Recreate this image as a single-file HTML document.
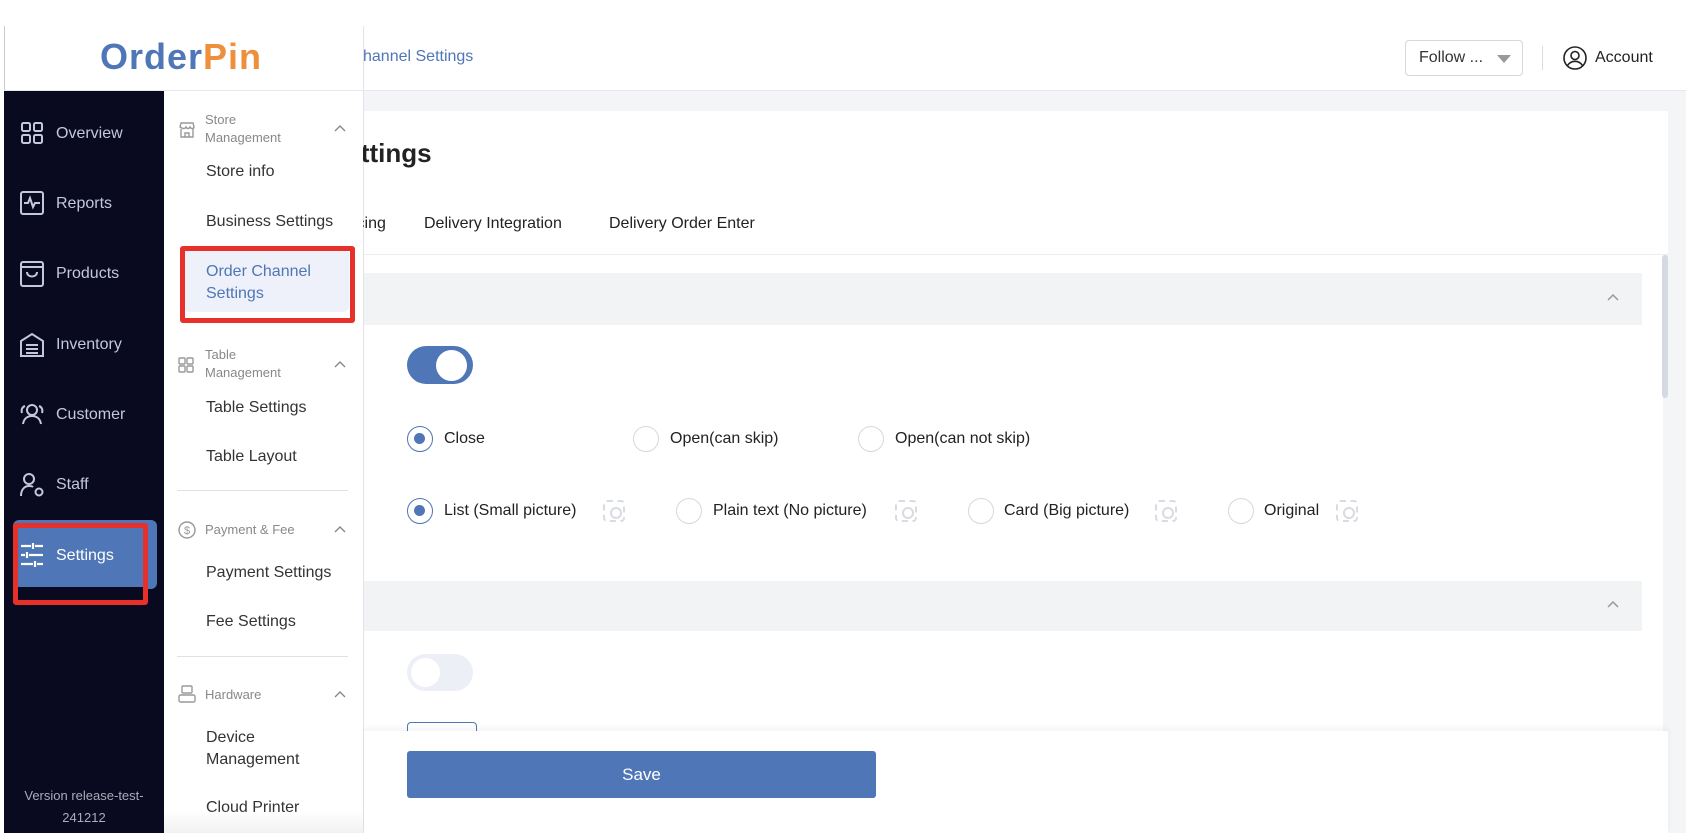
<!DOCTYPE html>
<html><head><meta charset="utf-8"><style>
*{box-sizing:border-box;margin:0;padding:0}
body{width:1686px;height:836px;background:#fff;font-family:"Liberation Sans",sans-serif;position:relative;overflow:hidden;color:#222}
.a{position:absolute;white-space:nowrap}
.side{left:4px;top:91px;width:160px;height:745px;background:#090a1f}
.si{color:#c3c7df;font-size:16px}
.sub{left:164px;top:91px;width:199px;height:745px;background:#fff}
.mt{font-size:16px;color:#333}
.mh{font-size:13px;color:#888;line-height:18px}
.radio{width:26px;height:26px;border:1.5px solid #d5d8e0;border-radius:50%}
.radio.on{border-color:#4f76b6}
.radio.on:after{content:"";position:absolute;left:6px;top:6px;width:11px;height:11px;border-radius:50%;background:#4f76b6}
.rt{font-size:16px;color:#222}
.eye{width:22px;height:22px;border:2px dashed #d8dbe2;border-radius:4px}
.eye:after{content:"";position:absolute;left:5px;top:5px;width:8px;height:8px;border:2px solid #d8dbe2;border-radius:50%}
</style></head><body>
<div class="a" style="left:4px;top:26px;width:1px;height:66px;background:#ccc"></div>
<div class="a" style="left:4px;top:90px;width:1682px;height:1px;background:#e6e8ee"></div>
<div class="a" style="left:363px;top:26px;width:1px;height:810px;background:#e2e4ec"></div>
<div class="a" style="left:100px;top:36px;font-size:36px;font-weight:bold;letter-spacing:1px"><span style="color:#4f76b6">Order</span><span style="color:#ee8f3c">Pin</span></div>
<div class="a" style="left:363px;top:48px;font-size:16px;color:#4f76b6">hannel Settings</div>
<div class="a" style="left:1405px;top:40px;width:118px;height:36px;border:1px solid #d8d8d8;border-radius:4px"></div>
<div class="a" style="left:1419px;top:49px;font-size:16px;color:#333">Follow ...</div>
<div class="a" style="left:1497px;top:55px;width:0;height:0;border-left:7px solid transparent;border-right:7px solid transparent;border-top:8px solid #999"></div>
<div class="a" style="left:1542px;top:46px;width:1px;height:24px;background:#ddd"></div>
<svg class="a" style="left:1563px;top:46px" width="24" height="24" viewBox="0 0 24 24" fill="none" stroke="#222" stroke-width="1.6"><circle cx="12" cy="12" r="11"/><circle cx="12" cy="9.5" r="4"/><path d="M4.5 19.5c2-3 4.5-4.2 7.5-4.2s5.5 1.2 7.5 4.2"/></svg>
<div class="a" style="left:1595px;top:49px;font-size:16px;color:#222">Account</div>
<div class="a" style="left:364px;top:91px;width:1322px;height:745px;background:#f4f5f7"></div>
<div class="a" style="left:364px;top:111px;width:1304px;height:143px;background:#fff"></div>
<div class="a" style="left:364px;top:254px;width:1304px;height:1px;background:#e8ecf4"></div>
<div class="a" style="left:364px;top:255px;width:1299px;height:530px;background:#fff"></div>
<div class="a" style="left:1662px;top:255px;width:6px;height:143px;background:#d5d9e2;border-radius:3px"></div>
<div class="a" style="left:329px;top:138px;font-size:26px;font-weight:bold;color:#222">Settings</div>
<div class="a" style="left:337px;top:215px;font-size:16px;color:#222">Pricing</div>
<div class="a" style="left:424px;top:215px;font-size:16px;color:#222">Delivery Integration</div>
<div class="a" style="left:609px;top:215px;font-size:16px;color:#222">Delivery Order Enter</div>
<div class="a" style="left:364px;top:273px;width:1278px;height:52px;background:#f2f3f5"></div>
<svg class="a" style="left:1606px;top:292px" width="14" height="10" viewBox="0 0 14 10"><path d="M2 8l5-5 5 5" fill="none" stroke="#999" stroke-width="1.5"/></svg>
<div class="a" style="left:407px;top:346px;width:66px;height:38px;border-radius:19px;background:#4f76b6"></div>
<div class="a" style="left:436px;top:350px;width:31px;height:31px;border-radius:50%;background:#fff"></div>
<div class="a radio on" style="left:407px;top:426px"></div><div class="a rt" style="left:444px;top:430px">Close</div>
<div class="a radio" style="left:633px;top:426px"></div><div class="a rt" style="left:670px;top:430px">Open(can skip)</div>
<div class="a radio" style="left:858px;top:426px"></div><div class="a rt" style="left:895px;top:430px">Open(can not skip)</div>
<div class="a radio on" style="left:407px;top:498px"></div><div class="a rt" style="left:444px;top:502px">List (Small picture)</div><div class="a eye" style="left:603px;top:500px"></div>
<div class="a radio" style="left:676px;top:498px"></div><div class="a rt" style="left:713px;top:502px">Plain text (No picture)</div><div class="a eye" style="left:895px;top:500px"></div>
<div class="a radio" style="left:968px;top:498px"></div><div class="a rt" style="left:1004px;top:502px">Card (Big picture)</div><div class="a eye" style="left:1155px;top:500px"></div>
<div class="a radio" style="left:1228px;top:498px"></div><div class="a rt" style="left:1264px;top:502px">Original</div><div class="a eye" style="left:1336px;top:500px"></div>
<div class="a" style="left:364px;top:581px;width:1278px;height:50px;background:#f2f3f5"></div>
<svg class="a" style="left:1606px;top:599px" width="14" height="10" viewBox="0 0 14 10"><path d="M2 8l5-5 5 5" fill="none" stroke="#999" stroke-width="1.5"/></svg>
<div class="a" style="left:407px;top:654px;width:66px;height:37px;border-radius:19px;background:#eceff6"></div>
<div class="a" style="left:411px;top:658px;width:29px;height:29px;border-radius:50%;background:#fff"></div>
<div class="a" style="left:407px;top:722px;width:70px;height:20px;border:1px solid #4f76b6;border-radius:4px"></div>
<div class="a" style="left:364px;top:731px;width:1304px;height:102px;background:#fff;box-shadow:0 -3px 6px rgba(0,0,0,.05)"></div>
<div class="a" style="left:407px;top:751px;width:469px;height:47px;background:#4f76b6;border-radius:3px;color:#fff;font-size:17px;text-align:center;line-height:47px">Save</div>
<div class="a side"></div>
<div class="a" style="left:13px;top:520px;width:144px;height:69px;background:#4f76b6;border-radius:6px"></div>
<div class="a" style="left:13px;top:523px;width:135px;height:82px;border:5px solid #e8302a;border-radius:3px"></div>
<div class="a" style="left:18px;top:587px;width:125px;height:13px;background:#090a1f"></div>
<svg class="a" style="left:20px;top:121px" width="24" height="24" viewBox="0 0 24 24" fill="none" stroke="#c3c7df" stroke-width="2"><rect x="2" y="2" width="8" height="8" rx="1.5"/><rect x="14" y="2" width="8" height="8" rx="1.5"/><rect x="2" y="14" width="8" height="8" rx="1.5"/><rect x="14" y="14" width="8" height="8" rx="1.5"/></svg>
<div class="a si" style="left:56px;top:125px">Overview</div>
<svg class="a" style="left:20px;top:191px" width="24" height="24" viewBox="0 0 24 24" fill="none" stroke="#c3c7df" stroke-width="2"><rect x="1" y="1" width="22" height="22" rx="2"/><path d="M4 12h4l2-5 3 9 2-4h5"/></svg>
<div class="a si" style="left:56px;top:195px">Reports</div>
<svg class="a" style="left:20px;top:261px" width="24" height="26" viewBox="0 0 24 26" fill="none" stroke="#c3c7df" stroke-width="2"><rect x="1" y="1" width="22" height="24" rx="2"/><path d="M1 6h22M7 11c0 6 10 6 10 0"/></svg>
<div class="a si" style="left:56px;top:265px">Products</div>
<svg class="a" style="left:19px;top:332px" width="26" height="26" viewBox="0 0 26 26" fill="none" stroke="#c3c7df" stroke-width="2"><path d="M2 9L13 2l11 7v15H2z"/><path d="M7 13h12M7 17h12M7 21h12"/></svg>
<div class="a si" style="left:56px;top:336px">Inventory</div>
<svg class="a" style="left:19px;top:402px" width="26" height="24" viewBox="0 0 26 24" fill="none" stroke="#c3c7df" stroke-width="2"><circle cx="13" cy="8" r="5"/><path d="M4 22c1-6 5-8 9-8s8 2 9 8M6 4C3 5 2 8 3 11M20 4c3 1 4 4 3 7"/></svg>
<div class="a si" style="left:56px;top:406px">Customer</div>
<svg class="a" style="left:19px;top:472px" width="26" height="26" viewBox="0 0 26 26" fill="none" stroke="#c3c7df" stroke-width="2"><circle cx="10" cy="7" r="5"/><path d="M2 24c0-7 4-10 8-10 2 0 3 0 4 1"/><circle cx="20" cy="20" r="3.5"/></svg>
<div class="a si" style="left:56px;top:476px">Staff</div>
<svg class="a" style="left:20px;top:543px" width="24" height="24" viewBox="0 0 24 24" fill="none" stroke="#fff" stroke-width="2.2"><path d="M1 3h10M15 3h8M13 0v6M1 12h4M9 12h14M7 9v6M1 21h12M17 21h6M15 18v6"/></svg>
<div class="a" style="left:56px;top:547px;font-size:16px;color:#fff">Settings</div>
<div class="a" style="left:4px;top:785px;width:160px;text-align:center;font-size:13px;color:#aab;line-height:22px;white-space:normal">Version release-test-<br>241212</div>
<div class="a sub"></div>
<svg class="a" style="left:178px;top:121px" width="18" height="18" viewBox="0 0 18 18" fill="none" stroke="#999" stroke-width="1.4"><path d="M2 6l1-4h12l1 4c0 2-3 2-4 0-1 2-3 2-4 0-1 2-3 2-6 0zM3 8v8h12V8M7 16v-4h4v4"/></svg>
<div class="a mh" style="left:205px;top:111px">Store<br>Management</div>
<svg class="a" style="left:333px;top:124px" width="14" height="9" viewBox="0 0 14 9"><path d="M2 7l5-5 5 5" fill="none" stroke="#888" stroke-width="1.4"/></svg>
<div class="a mt" style="left:206px;top:163px">Store info</div>
<div class="a mt" style="left:206px;top:213px">Business Settings</div>
<div class="a" style="left:183px;top:249px;width:166px;height:63px;background:#eef1f9;border-radius:6px"></div>
<div class="a" style="left:180px;top:246px;width:175px;height:77px;border:5px solid #e8302a;border-radius:3px"></div>
<div class="a" style="left:206px;top:261px;font-size:16px;color:#4f76b6;line-height:22px">Order Channel<br>Settings</div>
<svg class="a" style="left:178px;top:357px" width="16" height="16" viewBox="0 0 16 16" fill="none" stroke="#999" stroke-width="1.4"><rect x="1" y="1" width="6" height="6" rx="1"/><rect x="9" y="1" width="6" height="6" rx="1"/><rect x="1" y="9" width="6" height="6" rx="1"/><rect x="9" y="9" width="6" height="6" rx="1"/></svg>
<div class="a mh" style="left:205px;top:346px">Table<br>Management</div>
<svg class="a" style="left:333px;top:360px" width="14" height="9" viewBox="0 0 14 9"><path d="M2 7l5-5 5 5" fill="none" stroke="#888" stroke-width="1.4"/></svg>
<div class="a mt" style="left:206px;top:399px">Table Settings</div>
<div class="a mt" style="left:206px;top:448px">Table Layout</div>
<div class="a" style="left:177px;top:490px;width:171px;height:1px;background:#dfe1ea"></div>
<svg class="a" style="left:178px;top:521px" width="18" height="18" viewBox="0 0 18 18" fill="none" stroke="#999" stroke-width="1.4"><circle cx="9" cy="9" r="8"/><text x="9" y="13" font-size="11" text-anchor="middle" fill="#999" stroke="none" font-family="Liberation Sans">$</text></svg>
<div class="a mh" style="left:205px;top:521px">Payment &amp; Fee</div>
<svg class="a" style="left:333px;top:525px" width="14" height="9" viewBox="0 0 14 9"><path d="M2 7l5-5 5 5" fill="none" stroke="#888" stroke-width="1.4"/></svg>
<div class="a mt" style="left:206px;top:564px">Payment Settings</div>
<div class="a mt" style="left:206px;top:613px">Fee Settings</div>
<div class="a" style="left:177px;top:656px;width:171px;height:1px;background:#dfe1ea"></div>
<svg class="a" style="left:178px;top:685px" width="18" height="18" viewBox="0 0 18 18" fill="none" stroke="#999" stroke-width="1.4"><rect x="4" y="1" width="10" height="7" rx="1"/><rect x="1" y="10" width="16" height="7" rx="1.5"/></svg>
<div class="a mh" style="left:205px;top:686px">Hardware</div>
<svg class="a" style="left:333px;top:690px" width="14" height="9" viewBox="0 0 14 9"><path d="M2 7l5-5 5 5" fill="none" stroke="#888" stroke-width="1.4"/></svg>
<div class="a mt" style="left:206px;top:727px;line-height:22px">Device<br>Management</div>
<div class="a mt" style="left:206px;top:799px">Cloud Printer</div>
<div class="a" style="left:164px;top:810px;width:199px;height:26px;background:linear-gradient(rgba(255,255,255,0),#f0f0f0)"></div>
<div class="a" style="left:0;top:833px;width:1686px;height:3px;background:#fff"></div>
</body></html>
